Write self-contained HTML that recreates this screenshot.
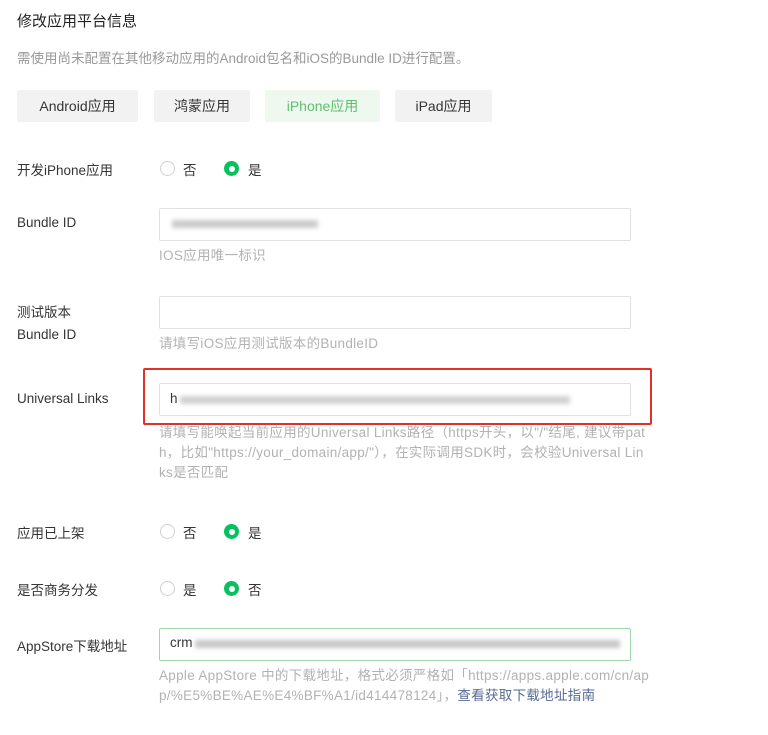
<!DOCTYPE html>
<html><head><meta charset="utf-8"><style>
body{margin:0;width:768px;height:735px;background:#fff;font-family:"Liberation Sans","Noto Sans CJK SC",sans-serif;color:#353535;position:relative;overflow:hidden}
.a{position:absolute;white-space:nowrap}
.btn{position:absolute;top:90px;height:32px;line-height:32px;background:#f2f2f2;text-align:center;font-size:14px;border-radius:2px;color:#353535}
.lbl{position:absolute;left:17px;font-size:13.5px;color:#353535}
.inp{position:absolute;left:159px;width:470px;height:31px;border:1px solid #e0e0e0;border-radius:2px;background:#fff}
.hint{position:absolute;left:159px;font-size:13.5px;letter-spacing:0.3px;color:#b2b2b2;line-height:20px;white-space:nowrap}
.r{position:absolute;width:13px;height:13px;border:1px solid #d0d0d0;border-radius:50%}
.rc{position:absolute;width:15px;height:15px;border-radius:50%;background:#07c160}
.rc:after{content:"";position:absolute;left:4.5px;top:4.5px;width:6px;height:6px;border-radius:50%;background:#fff}
.t{position:absolute;font-size:13.5px;color:#353535}
.blur{position:absolute;background:#ccc;filter:blur(2px);height:8px}
</style></head><body>
<div class="a" style="left:17px;top:10px;font-size:15px;color:#222">修改应用平台信息</div>
<div class="a" style="left:17px;top:47px;font-size:13.5px;color:#9a9a9a">需使用尚未配置在其他移动应用的Android包名和iOS的Bundle ID进行配置。</div>
<div class="btn" style="left:17px;width:121px">Android应用</div>
<div class="btn" style="left:154px;width:96px">鸿蒙应用</div>
<div class="btn" style="left:265px;width:115px;background:#eef8ef;color:#5fbf6f">iPhone应用</div>
<div class="btn" style="left:395px;width:97px">iPad应用</div>

<div class="lbl" style="top:159px">开发iPhone应用</div>
<div class="r" style="left:160px;top:161px"></div><div class="t" style="left:183px;top:159px">否</div>
<div class="rc" style="left:224px;top:161px"></div><div class="t" style="left:248px;top:159px">是</div>

<div class="lbl" style="top:215px">Bundle ID</div>
<div class="inp" style="top:208px"></div>
<div class="blur" style="left:172px;top:220px;width:146px"></div>
<div class="hint" style="top:246px">IOS应用唯一标识</div>

<div class="lbl" style="top:302px;line-height:22px">测试版本<br>Bundle ID</div>
<div class="inp" style="top:296px"></div>
<div class="hint" style="top:334px">请填写iOS应用测试版本的BundleID</div>

<div class="lbl" style="top:391px">Universal Links</div>
<div class="a" style="left:143px;top:368px;width:505px;height:53px;border:2px solid #e0302a;border-radius:2px"></div>
<div class="inp" style="top:383px"></div>
<div class="t" style="left:170px;top:391px">h</div>
<div class="blur" style="left:180px;top:396px;width:390px;background:#d2d2d2"></div>
<div class="hint" style="top:423px">请填写能唤起当前应用的Universal Links路径（https开头，以"/"结尾, 建议带pat<br>h，比如"https://your_domain/app/"），在实际调用SDK时，会校验Universal Lin<br>ks是否匹配</div>

<div class="lbl" style="top:522px">应用已上架</div>
<div class="r" style="left:160px;top:524px"></div><div class="t" style="left:183px;top:522px">否</div>
<div class="rc" style="left:224px;top:524px"></div><div class="t" style="left:248px;top:522px">是</div>

<div class="lbl" style="top:579px">是否商务分发</div>
<div class="r" style="left:160px;top:581px"></div><div class="t" style="left:183px;top:579px">是</div>
<div class="rc" style="left:224px;top:581px"></div><div class="t" style="left:248px;top:579px">否</div>

<div class="lbl" style="top:635px">AppStore下载地址</div>
<div class="inp" style="top:628px;border-color:#9fd8a8"></div>
<div class="t" style="left:170px;top:635px">crm</div>
<div class="blur" style="left:195px;top:640px;width:425px;background:#c8c8c8"></div>
<div class="hint" style="top:666px">Apple AppStore 中的下载地址，格式必须严格如「https://apps.apple.com/cn/ap<br>p/%E5%BE%AE%E4%BF%A1/id414478124」，<span style="color:#576b95">查看获取下载地址指南</span></div>
</body></html>
